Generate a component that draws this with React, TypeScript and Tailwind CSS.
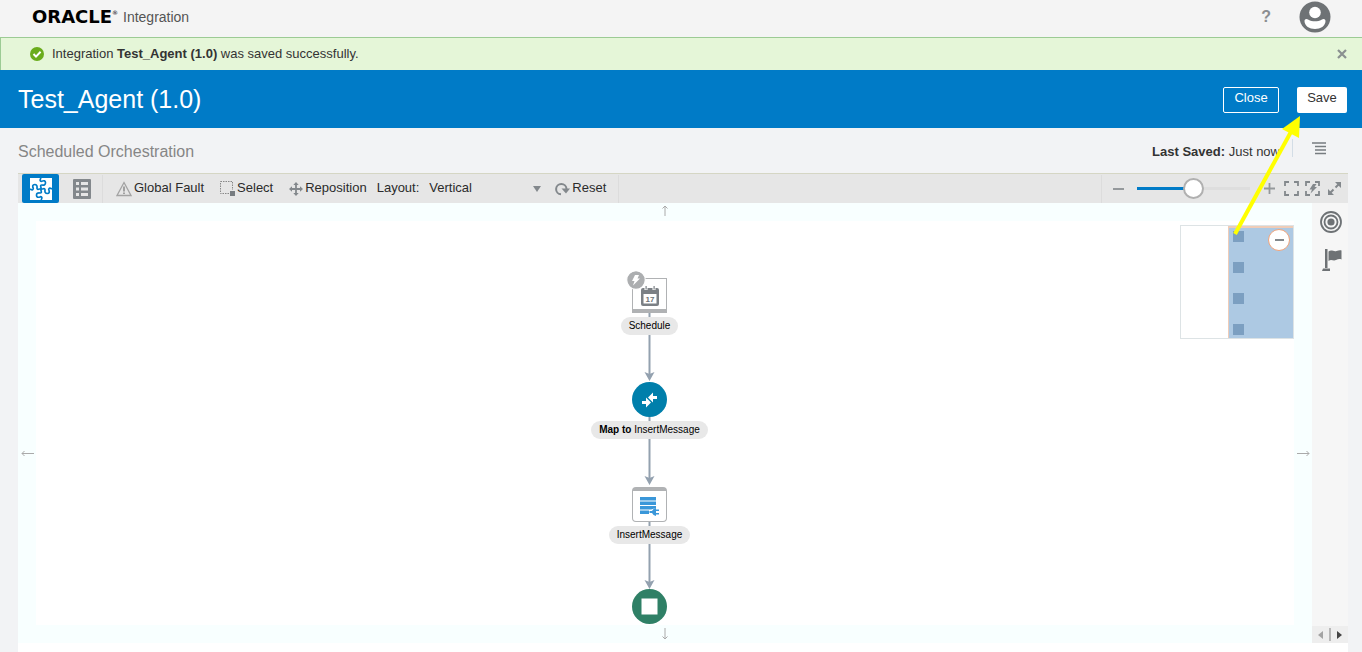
import { useState } from "react";
import type { ReactNode } from "react";

function ToolButton({ icon, label }: { icon: ReactNode; label: string }) {
  return (
    <button className="flex items-center gap-0.5 text-[#2b2b2b]">
      {icon}
      <span className="pb-0.5">{label}</span>
    </button>
  );
}

function Divider() {
  return <div className="h-7 w-px bg-[#dcdcdc]" />;
}

function NodeLabel({ children }: { children: ReactNode }) {
  return (
    <div className="h-[18px] whitespace-nowrap rounded-full bg-[#e8e8e8] px-2 text-[10px] leading-[18px] text-black">
      {children}
    </div>
  );
}

function CheckIcon() {
  return (
    <svg width="14" height="14" viewBox="0 0 14 14">
      <circle cx="7" cy="7" r="7" fill="#6aac1c" />
      <path d="M3.500 7l2.500 2.600 4.600-4.800" fill="none" stroke="#fff" strokeWidth="2" />
    </svg>
  );
}

function AvatarIcon() {
  return (
    <svg width="32" height="32" viewBox="0 0 32 32">
      <circle cx="16" cy="16" r="15.500" fill="#6e7275" />
      <circle cx="16" cy="11.500" r="5.800" fill="#fff" />
      <path d="M5.500 20c0-2 2-2.800 4-1.200 3.500 2 9.500 2 13 0 2-1.600 4-.8 4 1.200 0 5-5 8-10.500 8S5.500 25 5.500 20z" fill="#fff" />
    </svg>
  );
}

const puzzleArm = "M11 0q-2 3 .5 3.300 4-1.600 4 1.400 0 2.800-3.500 2.300-2-.2-1 2.500V11";

function PuzzleIcon() {
  return (
    <svg width="22" height="22" viewBox="0 0 22 22">
      <rect width="22" height="22" fill="#fff" />
      <g fill="none" stroke="#007bc7" strokeWidth="1.700">
        <path d={puzzleArm} />
        <path d={puzzleArm} transform="rotate(90 11 11)" />
        <path d={puzzleArm} transform="rotate(180 11 11)" />
        <path d={puzzleArm} transform="rotate(270 11 11)" />
      </g>
    </svg>
  );
}

function ListIcon() {
  return (
    <svg width="18" height="20" viewBox="0 0 18 20">
      <rect width="18" height="20" rx="1" fill="#83888c" />
      <path d="M3 3h3v3H3zM3 8.500h3v3H3zM3 14h3v3H3zM8 3h7v3H8zM8 8.500h7v3H8zM8 14h7v3H8z" fill="#e6e6e6" />
    </svg>
  );
}

function WarningIcon() {
  return (
    <svg width="16" height="16" viewBox="0 0 16 16">
      <path d="M8 1.500L15 14.500H1z" fill="none" stroke="#a3a3a3" strokeWidth="1.300" />
      <path d="M8 5.500v5M8 11.500v1.500" stroke="#8a8a8a" strokeWidth="1.500" />
    </svg>
  );
}

function SelectIcon() {
  return (
    <svg width="15" height="15" viewBox="0 0 15 15">
      <rect x=".5" y=".5" width="12" height="12" fill="none" stroke="#888" strokeDasharray="1.500 1" />
      <rect x="9" y="9" width="6" height="6" fill="#e6e6e6" />
      <rect x="10" y="10" width="5" height="5" fill="#777c80" />
    </svg>
  );
}

function MoveIcon() {
  return (
    <svg width="14" height="14" viewBox="0 0 14 14">
      <path d="M7 1v12M1 7h12" stroke="#83888c" strokeWidth="1.800" />
      <path d="M7 0l2.700 3H4.300zM7 14l2.700-3H4.300zM0 7l3-2.700v5.400zM14 7l-3-2.700v5.400z" fill="#83888c" />
    </svg>
  );
}

function ResetIcon() {
  return (
    <svg width="15" height="14" viewBox="0 0 15 14">
      <path d="M6 12.300A5.200 5.200 0 1 1 11.500 7" fill="none" stroke="#83888c" strokeWidth="2" />
      <path d="M6.500 6.500h8.500L11 11.500z" fill="#83888c" />
    </svg>
  );
}

function FrameIcon({ bolt }: { bolt?: boolean }) {
  return (
    <svg width="15" height="15" viewBox="0 0 15 15">
      <path d="M1 5V1h4M10 1h4v4M14 10v4h-4M5 14H1v-4" fill="none" stroke="#83888c" strokeWidth="1.800" />
      {bolt && <path d="M8 3h3.500L9.500 6H12l-6.500 6.500L7 8.500H4.500z" fill="#83888c" />}
    </svg>
  );
}

function ExpandIcon() {
  return (
    <svg width="13" height="13" viewBox="0 0 13 13">
      <path d="M7 0h6v6zM0 7v6h6z" fill="#83888c" />
      <path d="M11 2L7.500 5.500M5.500 7.500L2 11" stroke="#83888c" strokeWidth="2" />
    </svg>
  );
}

function MenuIcon() {
  return (
    <svg width="14" height="13" viewBox="0 0 14 13">
      <path d="M0 1h14M3 4.500h11M3 8h11M3 11.500h11" stroke="#777c80" strokeWidth="1.600" />
    </svg>
  );
}

function TargetIcon() {
  return (
    <svg width="22" height="22" viewBox="0 0 22 22">
      <circle cx="11" cy="11" r="10" fill="none" stroke="#6e7275" strokeWidth="1.800" />
      <circle cx="11" cy="11" r="6.500" fill="none" stroke="#6e7275" strokeWidth="1.800" />
      <circle cx="11" cy="11" r="3.600" fill="#6e7275" />
    </svg>
  );
}

function FlagIcon() {
  return (
    <svg width="20" height="22" viewBox="0 0 20 22">
      <path d="M3 0h2.500v19H3zM1 19.500h7V22H0z" fill="#6e7275" />
      <path d="M6.500 2.500c3-2.500 5 .5 8-.5 2-.6 3.500-1 5-.5v9c-2-.8-3.500-.4-5.500.6-3 1.300-4.500-1.300-7.500.9z" fill="#6e7275" />
    </svg>
  );
}

function CalendarIcon() {
  return (
    <svg width="18" height="20" viewBox="0 0 18 20">
      <path d="M0 4q0-2 2-2h14q2 0 2 2v14q0 2-2 2H2q-2 0-2-2z" fill="#7b8085" />
      <path d="M3.500 0h3v4h-3zM11.500 0h3v4h-3z" fill="#fff" />
      <path d="M4.500 0h1.200v3.500H4.500zM12.500 0h1.200v3.500h-1.200z" fill="#7b8085" />
      <path d="M2.500 8h13v9.500h-13z" fill="#fff" />
      <text x="9" y="15.500" textAnchor="middle" fontSize="8" fontWeight="bold" fill="#6e7275">17</text>
    </svg>
  );
}

function DatabaseIcon() {
  return (
    <svg width="20" height="19" viewBox="0 0 20 19">
      <path d="M0 0h16v3.500H0zM0 4.500h16V8H0zM0 9h16v2l-5 1.500H0zM0 13.500h9V17H0z" fill="#3a97d9" />
      <path d="M9.500 14h2.500q1.500-3 4-3v1.500h3V14h-3v2h3v1.500h-3V19q-2.500 0-4-3H9.500z" fill="#3a97d9" />
    </svg>
  );
}

function MapIcon() {
  return (
    <svg width="35" height="35" viewBox="0 0 35 35">
      <circle cx="17.500" cy="17.500" r="17.500" fill="#007fab" />
      <path d="M16 15.500l5-5V14h4v3h-4v3.500zM19 20.500l-5-5V19h-4v3h4v3.500z" fill="#fff" />
    </svg>
  );
}

function StopIcon() {
  return (
    <svg width="35" height="35" viewBox="0 0 35 35">
      <circle cx="17.500" cy="17.500" r="17.500" fill="#2f8066" />
      <rect x="9.500" y="9.500" width="16" height="16" fill="#fff" />
    </svg>
  );
}

function ScheduleNode() {
  return (
    <div className="relative flex size-[35px] items-center justify-center border border-b-4 border-[#b0b2b4] bg-white pt-1">
      <CalendarIcon />
      <svg className="absolute -left-[7px] -top-[9px]" width="20" height="20" viewBox="0 0 20 20">
        <circle cx="10" cy="10" r="9.300" fill="#acaeb0" stroke="#fff" strokeWidth="1.200" />
        <path d="M9 5h4l-1.500 3.500H14L7 15.500l1.500-4.500H6z" fill="#fff" />
      </svg>
    </div>
  );
}

function InsertNode() {
  return (
    <div className="flex size-[35px] items-center justify-center rounded-sm border border-t-4 border-[#b0b2b4] bg-white pb-1 pl-px pt-1">
      <DatabaseIcon />
    </div>
  );
}

const flowNodes = [
  { id: "schedule", icon: <ScheduleNode />, label: "Schedule", top: "top-[75px]" },
  { id: "map", icon: <MapIcon />, label: <><b>Map to</b> InsertMessage</>, top: "top-[179px]" },
  { id: "insert", icon: <InsertNode />, label: "InsertMessage", top: "top-[284px]" },
  { id: "stop", icon: <StopIcon />, label: null, top: "top-[386px]" },
];

function Connectors() {
  const segments = [[109, 178], [213, 282], [318, 386]];
  return (
    <svg className="absolute left-[calc(50%-25px)] top-0" width="20" height="400" viewBox="0 0 20 400">
      {segments.map(([from, to]) => (
        <g key={from}>
          <path d={`M9.500 ${from}V${to - 5}`} stroke="#93a1af" strokeWidth="2" />
          <path d={`M9.500 ${to}l-5-9 5 2 5-2z`} fill="#93a1af" />
        </g>
      ))}
    </svg>
  );
}

function Minimap() {
  return (
    <div className="absolute right-[18px] top-[22px] flex h-[114px] w-[114px] border border-[#dde3e5] bg-white">
      <div className="ml-auto flex h-full w-[65px] flex-col gap-5 border-l border-t-2 border-[#efccb8] bg-[#adc9e3] pl-1 pt-[3px]">
        {flowNodes.map((node) => (
          <div key={node.id} className="size-[11px] shrink-0 bg-[#7c9fc1]" />
        ))}
      </div>
      <button
        aria-label="Collapse overview"
        className="absolute right-[3px] top-[3px] flex size-[22px] items-center justify-center rounded-full border border-[#f0a47c] bg-white"
      >
        <span className="h-0.5 w-[9px] bg-[#83888c]" />
      </button>
    </div>
  );
}

function Canvas() {
  return (
    <main className="relative flex-1 bg-white shadow-[inset_0_0_0_18px_#f8ffff]">
      <svg className="absolute left-[calc(50%-4px)] top-0.5" width="8" height="11" viewBox="0 0 8 11">
        <path d="M4 11V1M1.500 3.500L4 1l2.500 2.500" fill="none" stroke="#aaa" />
      </svg>
      <svg className="absolute bottom-[3px] left-[calc(50%-4px)]" width="8" height="12" viewBox="0 0 8 12">
        <path d="M4 0v11M1.500 8.500L4 11l2.500-2.500" fill="none" stroke="#aaa" />
      </svg>
      <svg className="absolute left-[3px] top-[246px]" width="13" height="8" viewBox="0 0 13 8">
        <path d="M13 4.500H1M3.500 2L1 4.500 3.500 7" fill="none" stroke="#aaa" />
      </svg>
      <svg className="absolute right-[2px] top-[246px]" width="13" height="8" viewBox="0 0 13 8">
        <path d="M0 4.500h12M9.500 2L12 4.500 9.500 7" fill="none" stroke="#aaa" />
      </svg>

      <Connectors />
      {flowNodes.map((node) => (
        <div
          key={node.id}
          className={`absolute left-[calc(50%-75px)] flex w-[119px] flex-col items-center gap-1 ${node.top}`}
        >
          {node.icon}
          {node.label && <NodeLabel>{node.label}</NodeLabel>}
        </div>
      ))}
      <Minimap />
    </main>
  );
}

function Toolbar() {
  const [zoom, setZoom] = useState(50);
  return (
    <div className="flex h-[30px] items-center border-t border-[#d5d6c4] bg-[#e6e6e6] pl-1 pr-[7px] text-[13px] leading-4">
      <button aria-label="Diagram view" className="flex h-[29px] w-[37px] items-center justify-center rounded-xs bg-[#007bc7]">
        <PuzzleIcon />
      </button>
      <button aria-label="List view" className="ml-3.5 mr-[11px]">
        <ListIcon />
      </button>
      <Divider />
      <div className="ml-[13px] flex items-center gap-4">
        <ToolButton icon={<WarningIcon />} label="Global Fault" />
        <ToolButton icon={<SelectIcon />} label="Select" />
        <ToolButton icon={<MoveIcon />} label="Reposition" />
      </div>
      <label htmlFor="layout" className="mx-2.5 pb-0.5 text-[#2b2b2b]">Layout:</label>
      <div className="relative mr-2.5 w-[116px] pb-0.5">
        <select id="layout" className="block w-full appearance-none bg-transparent text-[#2b2b2b]">
          <option>Vertical</option>
          <option>Horizontal</option>
        </select>
        <svg className="pointer-events-none absolute right-1 top-[6px]" width="8" height="6" viewBox="0 0 8 6">
          <path d="M0 0h8L4 6z" fill="#83888c" />
        </svg>
      </div>
      <ToolButton icon={<ResetIcon />} label="Reset" />
      <div className="ml-3"><Divider /></div>

      <div className="ml-auto flex items-center">
        <Divider />
        <button aria-label="Zoom out" className="ml-[11px] flex h-4 w-[11px] items-center">
          <span className="h-0.5 w-full bg-[#95999c]" />
        </button>
        <input
          type="range"
          aria-label="Zoom"
          value={zoom}
          onChange={(e) => setZoom(Number(e.target.value))}
          className="ml-[13px] h-5 w-[113px] appearance-none bg-[length:100%_3px] bg-center bg-no-repeat [&::-webkit-slider-thumb]:size-[21px] [&::-webkit-slider-thumb]:appearance-none [&::-webkit-slider-thumb]:rounded-full [&::-webkit-slider-thumb]:border-2 [&::-webkit-slider-thumb]:border-[#b0b0b0] [&::-webkit-slider-thumb]:bg-white"
          style={{ backgroundImage: `linear-gradient(to right, #007bc7 ${zoom}%, #dedede ${zoom}%)` }}
        />
        <button aria-label="Zoom in" className="ml-3.5">
          <svg width="11" height="11" viewBox="0 0 11 11">
            <path d="M5.500 0v11M0 5.500h11" stroke="#95999c" strokeWidth="1.800" />
          </svg>
        </button>
        <button aria-label="Fit to view" className="ml-[9px]"><FrameIcon /></button>
        <button aria-label="Fit selection" className="ml-1.5"><FrameIcon bolt /></button>
        <button aria-label="Full screen" className="ml-2"><ExpandIcon /></button>
      </div>
    </div>
  );
}

function SideRail() {
  return (
    <aside className="flex w-9 flex-col bg-[#f6f6f6] pt-2">
      <button aria-label="Tracking" className="ml-2 w-[22px]"><TargetIcon /></button>
      <button aria-label="Errors" className="ml-2.5 mt-4 w-5"><FlagIcon /></button>
      <div className="mt-auto flex h-[17px] w-full items-center justify-center gap-1.5 bg-[#eeeeee]">
        <button aria-label="Previous">
          <svg width="5" height="8" viewBox="0 0 5 8"><path d="M5 0v8L0 4z" fill="#a3a3a3" /></svg>
        </button>
        <span className="h-[13px] w-0.5 bg-[#b8b8b8]" />
        <button aria-label="Next">
          <svg width="5" height="8" viewBox="0 0 5 8"><path d="M0 0v8l5-4z" fill="#444" /></svg>
        </button>
      </div>
    </aside>
  );
}

export default function App() {
  return (
    <div className="relative flex min-h-screen flex-col bg-[#f2f3f5] font-['Liberation_Sans',Arial,sans-serif] text-[13px] text-[#333]">
      <header className="flex h-[37px] items-center bg-[#f4f4f4] pb-[3px] pl-8 pr-[31px]">
        <div className="flex w-[84px] items-start font-['DejaVu_Sans',sans-serif] text-black">
          <span className="text-lg font-bold leading-5">ORACLE</span>
          <span className="text-[6px] leading-3">®</span>
        </div>
        <span className="ml-[7px] text-sm text-[#555]">Integration</span>
        <button aria-label="Help" className="ml-auto text-base font-bold text-[#8b8e91]">?</button>
        <button aria-label="Account" className="ml-7"><AvatarIcon /></button>
      </header>

      <div className="flex h-[33px] items-center border-l border-t border-[#9ccb94] bg-[#e5f6d8] pl-[29px] pr-[15px]">
        <CheckIcon />
        <p className="ml-2">Integration <b>Test_Agent (1.0)</b> was saved successfully.</p>
        <button aria-label="Dismiss" className="ml-auto">
          <svg width="10" height="10" viewBox="0 0 10 10">
            <path d="M1 1l8 8M9 1L1 9" stroke="#8a9090" strokeWidth="2.200" />
          </svg>
        </button>
      </div>

      <div className="flex h-[58px] items-center bg-[#007bc7] pl-[18px] pr-[15px] pt-0.5">
        <h1 className="text-[25px] text-white">Test_Agent (1.0)</h1>
        <button className="ml-auto h-[26px] w-14 rounded-xs border border-white pb-1 text-white">Close</button>
        <button className="ml-[18px] h-[26px] w-[50px] rounded-xs bg-white pb-1 text-[#333]">Save</button>
      </div>

      <div className="flex h-[45px] items-center pl-[18px] pr-9">
        <h2 className="pt-0.5 text-base text-[#868686]">Scheduled Orchestration</h2>
        <p className="ml-auto pt-0.5"><b>Last Saved:</b> Just now</p>
        <div className="mb-1.5 ml-3 mr-[19px] h-[18px] w-px bg-[#d3dde6]" />
        <button aria-label="Menu" className="mb-1"><MenuIcon /></button>
      </div>

      <div className="ml-[18px] mr-3.5 flex flex-1 flex-col bg-white pb-[9px]">
        <Toolbar />
        <div className="flex min-h-[440px] flex-1">
          <Canvas />
          <SideRail />
        </div>
      </div>

      {/* Callout pointing at the Save button */}
      <svg className="pointer-events-none absolute right-[60px] top-[114px]" width="72" height="124" viewBox="0 0 72 124">
        <path d="M5 120L62 16" stroke="#ffff00" strokeWidth="4" />
        <path d="M70 2L52 15l17 9z" fill="#ffff00" />
      </svg>
    </div>
  );
}
